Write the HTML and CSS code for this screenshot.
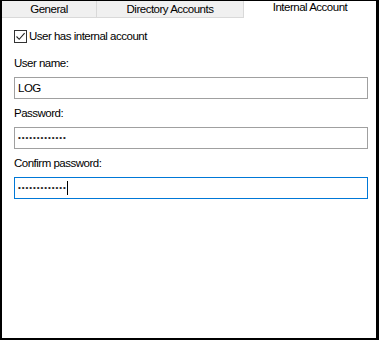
FILE: index.html
```html
<!DOCTYPE html>
<html>
<head>
<meta charset="utf-8">
<link rel="stylesheet" href="styles.css">
</head>
<body>
<div class="frame">
  <div class="tabs">
    <div class="tab tab-general">General</div>
    <div class="tab tab-dir">Directory Accounts</div>
    <div class="tab tab-active">Internal Account</div>
  </div>
  <div class="panel">
    <div class="check-row">
      <span class="checkbox">
        <svg width="11" height="11" viewBox="0 0 11 11"><path d="M1.5 5.5 L4.2 8.3 L9.6 2.2" fill="none" stroke="#222" stroke-width="1.1"/></svg>
      </span>
      <span class="check-label">User has internal account</span>
    </div>
    <div class="label label-first">User name:</div>
    <div class="field"><span class="value">LOG</span></div>
    <div class="label">Password:</div>
    <div class="field"><span class="dots">•••••••••••••</span></div>
    <div class="label">Confirm password:</div>
    <div class="field field-focus"><span class="dots">•••••••••••••</span><span class="caret"></span></div>
  </div>
</div>
</body>
</html>
```

FILE: styles.css
```css
html, body {
  margin: 0;
  padding: 0;
  background: #fff;
}
.frame {
  width: 379px;
  height: 340px;
  box-sizing: border-box;
  border-style: solid;
  border-color: #000;
  border-width: 1px 3px 2px 2px;
  background: #fff;
  font-family: "Liberation Sans", Arial, sans-serif;
  font-size: 11.5px;
  letter-spacing: -0.5px;
  color: #000;
  display: flex;
  flex-direction: column;
}
.tabs {
  display: flex;
  height: 17px;
  align-items: stretch;
}
.tab {
  display: flex;
  align-items: flex-end;
  justify-content: center;
  box-sizing: border-box;
  background: #f0f0f0;
  border-bottom: 1px solid #d9d9d9;
  border-right: 1px solid #d9d9d9;
  padding-bottom: 1px;
  line-height: 14px;
}
.tab-general { width: 95px; }
.tab-dir { width: 147px; }
.tab-active {
  flex: 1;
  background: #fff;
  border: none;
  align-items: flex-start;
  padding-top: 0;
  line-height: 13px;
}
.panel {
  display: flex;
  flex-direction: column;
  padding: 0 8px 0 12px;
}
.check-row {
  display: flex;
  align-items: center;
  margin-top: 12px;
  height: 13px;
}
.checkbox {
  width: 11px;
  height: 11px;
  border: 1px solid #333;
  box-sizing: content-box;
  display: flex;
  align-items: center;
  justify-content: center;
  margin-right: 2px;
  background: #fff;
}
.checkbox svg { display: block; }
.check-label { line-height: 13px; }
.label {
  line-height: 14px;
  margin-top: 7px;
  margin-bottom: 7px;
}
.label-first { margin-top: 13px; }
.field {
  height: 22px;
  box-sizing: border-box;
  border: 1px solid #a0a0a0;
  display: flex;
  align-items: center;
  padding-left: 3px;
}
.value { line-height: 14px; }
.dots {
  font-size: 8px;
  letter-spacing: 0.95px;
  line-height: 10px;
  color: #222;
}
.field-focus { border-color: #0078d7; }
.caret {
  display: inline-block;
  width: 1px;
  height: 14px;
  background: #000;
}
```
